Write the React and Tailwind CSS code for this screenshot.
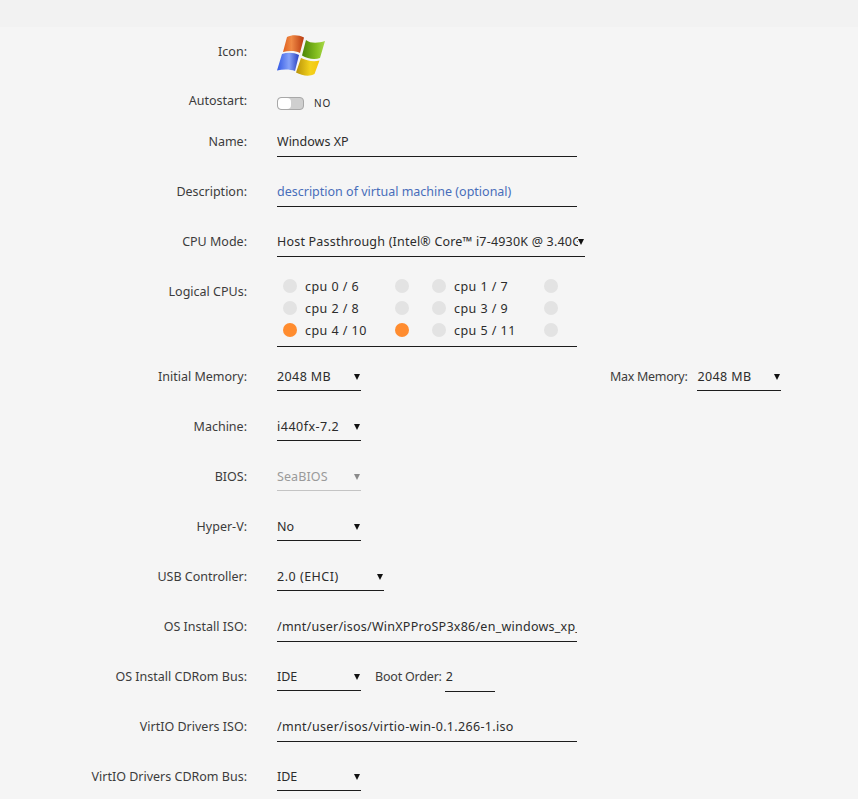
import React from 'react';

const font = { fontFamily: '"Noto Sans", sans-serif' };

function WinLogo() {
  return (
    <svg width="50" height="46" viewBox="0 0 50 46" className="block">
      <defs>
        <linearGradient id="wo" x1="0" y1="0" x2="1" y2="0">
          <stop offset="0" stopColor="#e0601f" />
          <stop offset="0.4" stopColor="#f08a45" />
          <stop offset="1" stopColor="#b83a10" />
        </linearGradient>
        <linearGradient id="wg" x1="0" y1="0" x2="1" y2="0">
          <stop offset="0" stopColor="#4a8508" />
          <stop offset="0.65" stopColor="#86c021" />
          <stop offset="1" stopColor="#a8d84a" />
        </linearGradient>
        <linearGradient id="wb" x1="0" y1="0" x2="1" y2="0">
          <stop offset="0" stopColor="#3258e4" />
          <stop offset="0.55" stopColor="#86a2f8" />
          <stop offset="1" stopColor="#2a40c0" />
        </linearGradient>
        <linearGradient id="wy" x1="0" y1="0" x2="1" y2="0">
          <stop offset="0" stopColor="#b8920a" />
          <stop offset="0.6" stopColor="#f3d21c" />
          <stop offset="1" stopColor="#f5c40c" />
        </linearGradient>
      </defs>
      <path d="M10 5C15 2.500 21.500 2.500 27 5.500L23 21C18 18.500 12 18.500 6 20Z" fill="url(#wo)" />
      <path d="M29 8C34 12 42 11 48 9L43 26C38 28 30.500 27 25 23.500Z" fill="url(#wg)" />
      <path d="M5 22C11 20 17 20.500 22 23L18 39C13 37 6 37 0 38.500Z" fill="url(#wb)" />
      <path d="M24 26C30 29 37 30 42.500 28.500L37.500 42C32 45 25 43.500 19 40.500Z" fill="url(#wy)" />
    </svg>
  );
}

function Arrow({ muted }) {
  return (
    <svg width="6" height="6" viewBox="0 0 6 6" className="absolute right-[1px] top-[13px]">
      <polygon points="0,0 6,0 3,6" fill={muted ? '#8a8a8a' : '#111'} />
    </svg>
  );
}

function Field({ children, className = '' }) {
  return (
    <div className={`h-[31px] border-b border-[#1c1c1c] leading-[32px] whitespace-nowrap overflow-hidden ${className}`}>
      {children}
    </div>
  );
}

function Select({ value, width, muted, tracking = '' }) {
  return (
    <div
      className={`relative h-[30px] border-b leading-[31px] whitespace-nowrap ${width} ${
        muted ? 'border-[#c4c4c4] text-[#9a9a9a]' : 'border-[#1c1c1c]'
      }`}
    >
      <div className={`h-[29px] overflow-hidden mr-[7px] ${tracking}`}>{value}</div>
      <Arrow muted={muted} />
    </div>
  );
}

function Row({ label, children }) {
  return (
    <div className="flex h-[50px] items-center">
      <div className="w-[247px] shrink-0 pt-[2px] text-right text-[#3c3c3c]">{label}</div>
      <div className="ml-[30px] flex items-center">{children}</div>
    </div>
  );
}

const cpus = [
  ['cpu 0 / 6', false, false, 'cpu 1 / 7', false, false],
  ['cpu 2 / 8', false, false, 'cpu 3 / 9', false, false],
  ['cpu 4 / 10', true, true, 'cpu 5 / 11', false, false],
];

function Dot({ on }) {
  return <span className={`w-[14px] h-[14px] rounded-full ${on ? 'bg-[#ff8c2f]' : 'bg-[#e3e3e3]'}`}></span>;
}

function CpuCell({ label, a, b }) {
  return (
    <div className="w-[149px] h-[22px] flex items-center pl-[6px]">
      <Dot on={a} />
      <span className="ml-[8px] mt-[2px] w-[90px] tracking-[0.45px]">{label}</span>
      <Dot on={b} />
    </div>
  );
}

export default function App() {
  return (
    <div className="h-[799px] overflow-hidden bg-[#f5f5f5] text-[12.5px] text-[#2c2c2c]" style={font}>
      <div className="h-[27px] bg-[#f2f2f2]"></div>

      <div className="flex h-[64px]">
        <div className="w-[247px] text-right text-[#3c3c3c] pt-[16px]">Icon:</div>
        <div className="ml-[30px] pt-[5px]">
          <WinLogo />
        </div>
      </div>

      <div className="flex h-[25px] items-center">
        <div className="w-[247px] text-right text-[#3c3c3c] mb-[5px]">Autostart:</div>
        <div className="ml-[30px] flex items-center">
          <div className="w-[27px] h-[13px] rounded-[4px] border border-[#a8a8a8] bg-[#cfcfcf] overflow-hidden">
            <div className="w-[13px] h-full rounded-[4px] bg-white"></div>
          </div>
          <span className="ml-[10px] text-[10px] tracking-[1px]">NO</span>
        </div>
      </div>

      <Row label="Name:">
        <Field className="w-[300px]">Windows XP</Field>
      </Row>
      <Row label="Description:">
        <Field className="w-[300px] text-[#486dba]">description of virtual machine (optional)</Field>
      </Row>
      <Row label="CPU Mode:">
        <div className="relative w-[308px] h-[31px] border-b border-[#1c1c1c] leading-[32px] whitespace-nowrap">
          <div className="overflow-hidden w-[301px] tracking-[0.2px]">Host Passthrough (Intel® Core™ i7-4930K @ 3.40GHz)</div>
          <Arrow />
        </div>
      </Row>

      <div className="flex h-[85px]">
        <div className="w-[247px] text-right text-[#3c3c3c] pt-[17px]">Logical CPUs:</div>
        <div className="ml-[30px] w-[300px] h-[81px] border-b border-[#1c1c1c] pt-[9px]">
          {cpus.map((r, i) => (
            <div key={i} className="flex">
              <CpuCell label={r[0]} a={r[1]} b={r[2]} />
              <CpuCell label={r[3]} a={r[4]} b={r[5]} />
            </div>
          ))}
        </div>
      </div>

      <Row label="Initial Memory:">
        <Select value="2048 MB" width="w-[84px]" tracking="tracking-[0.4px]" />
        <span className="ml-[249px] pt-[2px] text-[#3c3c3c] tracking-[-0.3px]">Max Memory:</span>
        <div className="ml-[10px]">
          <Select value="2048 MB" width="w-[84px]" tracking="tracking-[0.4px]" />
        </div>
      </Row>
      <Row label="Machine:">
        <Select value="i440fx-7.2" width="w-[84px]" tracking="tracking-[0.5px]" />
      </Row>
      <Row label="BIOS:">
        <Select value="SeaBIOS" width="w-[84px]" muted tracking="tracking-[0.1px]" />
      </Row>
      <Row label="Hyper-V:">
        <Select value="No" width="w-[84px]" />
      </Row>
      <Row label="USB Controller:">
        <Select value="2.0 (EHCI)" width="w-[107px]" tracking="tracking-[0.5px]" />
      </Row>
      <Row label="OS Install ISO:">
        <Field className="w-[300px] tracking-[0.25px]">/mnt/user/isos/WinXPProSP3x86/en_windows_xp_professional_with_sp3.iso</Field>
      </Row>
      <Row label="OS Install CDRom Bus:">
        <Select value="IDE" width="w-[84px]" />
        <span className="ml-[14px] pt-[2px] text-[#3c3c3c] tracking-[-0.2px]">Boot Order:</span>
        <Field className="ml-[3px] w-[50px] pl-[1px]">2</Field>
      </Row>
      <Row label="VirtIO Drivers ISO:">
        <Field className="w-[300px] tracking-[0.33px]">/mnt/user/isos/virtio-win-0.1.266-1.iso</Field>
      </Row>
      <Row label="VirtIO Drivers CDRom Bus:">
        <Select value="IDE" width="w-[84px]" />
      </Row>
    </div>
  );
}
